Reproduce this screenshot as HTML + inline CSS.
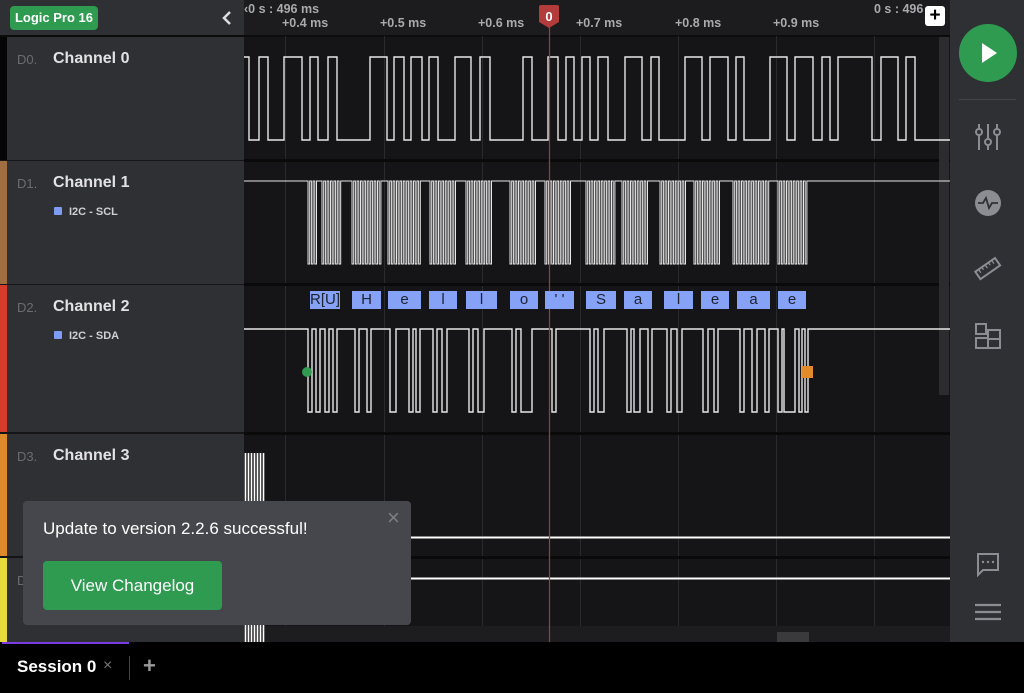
<!DOCTYPE html>
<html><head><meta charset="utf-8">
<style>
*{margin:0;padding:0;box-sizing:border-box}
body{width:1024px;height:693px;overflow:hidden;background:#151517;font-family:"Liberation Sans",sans-serif;position:relative}
.abs{position:absolute}
.lp{position:absolute;left:0;width:244px;background:#2f3034}
.bar{position:absolute;left:0;width:7px}
.dn{position:absolute;left:17px;font-size:13px;color:#6b6c70}
.cn{position:absolute;left:53px;font-size:16px;color:#e2e2e4;font-weight:bold}
.an{position:absolute;left:54px;font-size:11px;color:#d0d0d4;font-weight:bold}
.an i{display:inline-block;width:8px;height:8px;background:#7f9cf5;border-radius:1px;margin-right:7px;vertical-align:-0px}
.tl{position:absolute;top:16px;font-size:12.5px;color:#a9aaae;font-weight:bold}
.lb{position:absolute;top:291px;height:18px;background:#86a2f7;color:#1d2230;font-size:15px;text-align:center;line-height:18px}
</style></head><body>
<div class="abs" style="left:0;top:0;width:244px;height:36px;background:#2f3034"></div>
<div class="abs" style="left:244px;top:0;width:706px;height:36px;background:#1c1c1e"></div>
<div class="abs" style="left:0;top:35px;width:950px;height:2px;background:#0c0c0d"></div>
<div class="abs" style="left:10px;top:6px;width:88px;height:24px;background:#2e9b50;border-radius:4px;color:#fff;font-weight:bold;font-size:13px;line-height:24px;text-align:center">Logic Pro 16</div>
<svg class="abs" style="left:219px;top:9px" width="16" height="18"><path d="M11 3 L5 9 L11 15" stroke="#ddd" stroke-width="2.5" fill="none"/></svg>
<div class="abs" style="left:244px;top:2px;font-size:12.5px;color:#a9aaae;font-weight:bold">‹0 s : 496 ms</div>
<div class="tl" style="left:282px">+0.4 ms</div>
<div class="tl" style="left:380px">+0.5 ms</div>
<div class="tl" style="left:478px">+0.6 ms</div>
<div class="tl" style="left:576px">+0.7 ms</div>
<div class="tl" style="left:675px">+0.8 ms</div>
<div class="tl" style="left:773px">+0.9 ms</div>
<div class="abs" style="left:874px;top:2px;font-size:12.5px;color:#a9aaae;font-weight:bold">0 s : 496</div>
<div class="abs" style="left:925px;top:6px;width:20px;height:20px;background:#fff;border-radius:3px;color:#000;font-weight:bold;font-size:19px;line-height:19px;text-align:center">+</div>

<div class="lp" style="top:37px;height:123px"></div>
<div class="lp" style="top:161px;height:123px"></div>
<div class="lp" style="top:285px;height:147px"></div>
<div class="lp" style="top:434px;height:122px"></div>
<div class="lp" style="top:558px;height:84px"></div>
<div class="bar" style="top:37px;height:123px;background:#050505"></div>
<div class="bar" style="top:161px;height:123px;background:#a06e40"></div>
<div class="bar" style="top:285px;height:147px;background:#d63b2b"></div>
<div class="bar" style="top:434px;height:122px;background:#de8a2a"></div>
<div class="bar" style="top:558px;height:84px;background:#e8d93c"></div>
<div class="dn" style="top:52px">D0.</div><div class="cn" style="top:50px">Channel 0</div>
<div class="dn" style="top:176px">D1.</div><div class="cn" style="top:174px">Channel 1</div>
<div class="an" style="top:206px"><i></i>I2C - SCL</div>
<div class="dn" style="top:300px">D2.</div><div class="cn" style="top:298px">Channel 2</div>
<div class="an" style="top:330px"><i></i>I2C - SDA</div>
<div class="dn" style="top:449px">D3.</div><div class="cn" style="top:447px">Channel 3</div>
<div class="dn" style="top:573px">D</div>

<svg class="abs" style="left:0;top:0" width="950" height="642" id="w">
<g stroke="#2a2a2d" stroke-width="1">
<line x1="285.5" y1="36" x2="285.5" y2="642"/><line x1="384.5" y1="36" x2="384.5" y2="642"/><line x1="482.5" y1="36" x2="482.5" y2="642"/><line x1="580.5" y1="36" x2="580.5" y2="642"/><line x1="678.5" y1="36" x2="678.5" y2="642"/><line x1="776.5" y1="36" x2="776.5" y2="642"/><line x1="874.5" y1="36" x2="874.5" y2="642"/>
</g>
<g fill="#0a0a0b"><rect x="244" y="159" width="706" height="3"/><rect x="244" y="283" width="706" height="3"/><rect x="244" y="432" width="706" height="3"/><rect x="244" y="556" width="706" height="3"/></g>
<rect x="244" y="626" width="706" height="16" fill="#1d1d1f"/>
<rect x="777" y="632" width="32" height="10" fill="#3a3a3c"/>
<rect x="939" y="37" width="10" height="358" fill="#2c2c2e"/>
<g id="waves" fill="none" stroke="#e8e8e8" stroke-width="1.4"></g>
<line x1="410" y1="537.5" x2="950" y2="537.5" stroke="#fff" stroke-width="2"/>
<line x1="410" y1="578.5" x2="950" y2="578.5" stroke="#fff" stroke-width="2"/>
<circle cx="307" cy="372" r="5" fill="#2e9b50"/>
<rect x="802" y="366" width="11" height="12" fill="#e08a2a"/>
<line x1="549.5" y1="24" x2="549.5" y2="642" stroke="#a33a3a" stroke-width="1.2"/>
<path d="M539 7 Q539 5 541 5 L557 5 Q559 5 559 7 L559 22 L549 28 L539 22Z" fill="#b23c3c"/>
<text x="549" y="21" fill="#fff" font-size="13" font-weight="bold" text-anchor="middle" font-family="Liberation Sans">0</text>
</svg>
<div id="lbls"></div>

<div class="abs" style="left:950px;top:0;width:74px;height:642px;background:#2f3034"></div>
<svg class="abs" style="left:950px;top:0" width="74" height="642">
<circle cx="38" cy="53" r="29" fill="#2e9b50"/>
<path d="M32 43 L47 53 L32 63Z" fill="#fff"/>
<line x1="9" y1="99.5" x2="66" y2="99.5" stroke="#45464a" stroke-width="1"/>
<g stroke="#8c8d92" stroke-width="2" fill="none">
<line x1="29" y1="124" x2="29" y2="150"/><line x1="38" y1="124" x2="38" y2="150"/><line x1="47" y1="124" x2="47" y2="150"/>
<circle cx="29" cy="132" r="3" fill="#2f3034"/><circle cx="38" cy="142" r="3" fill="#2f3034"/><circle cx="47" cy="132" r="3" fill="#2f3034"/>
</g>
<circle cx="38" cy="203" r="13" fill="#8c8d92"/>
<path d="M28 203 L33 203 L36 198 L39 208 L42 203 L48 203" stroke="#2f3034" stroke-width="1.8" fill="none"/>
<g transform="rotate(-35 38 269)"><rect x="26" y="264" width="24" height="9" stroke="#8c8d92" stroke-width="2" fill="none"/>
<path d="M30 264v4M34 264v3M38 264v4M42 264v3M46 264v4" stroke="#8c8d92" stroke-width="1.3"/></g>
<g stroke="#8c8d92" stroke-width="2" fill="none"><rect x="26" y="324" width="10" height="10"/><path d="M38 330 H50 V348 H26 V338 H38 Z M38 338 V348 M38 339 H50"/></g>
<g stroke="#8c8d92" stroke-width="2" fill="none"><path d="M28 554 H48 V570 H33 L28 575 Z"/></g>
<g fill="#8c8d92"><circle cx="33" cy="562" r="1.2"/><circle cx="38" cy="562" r="1.2"/><circle cx="43" cy="562" r="1.2"/></g>
<g stroke="#8c8d92" stroke-width="2.2"><line x1="25" y1="605" x2="51" y2="605"/><line x1="25" y1="612" x2="51" y2="612"/><line x1="25" y1="619" x2="51" y2="619"/></g>
</svg>

<div class="abs" style="left:23px;top:501px;width:388px;height:124px;background:#46474c;border-radius:4px"></div>
<div class="abs" style="left:43px;top:519px;font-size:17px;color:#fff">Update to version 2.2.6 successful!</div>
<div class="abs" style="left:387px;top:505px;font-size:22px;color:#7d7e83">×</div>
<div class="abs" style="left:43px;top:561px;width:179px;height:49px;background:#2e9b50;border-radius:4px;color:#fff;font-size:17px;line-height:49px;text-align:center">View Changelog</div>

<div class="abs" style="left:0;top:642px;width:1024px;height:51px;background:#000"></div>
<div class="abs" style="left:2px;top:642px;width:127px;height:2px;background:#7a3cdc"></div>
<div class="abs" style="left:17px;top:657px;font-size:17px;font-weight:bold;color:#fff">Session 0</div>
<div class="abs" style="left:103px;top:657px;font-size:16px;color:#777">×</div>
<div class="abs" style="left:129px;top:656px;width:1px;height:24px;background:#444"></div>
<div class="abs" style="left:143px;top:653px;font-size:22px;font-weight:bold;color:#999">+</div>

<script>
var NS="http://www.w3.org/2000/svg",g=document.getElementById("waves");
function path(d,sw){var p=document.createElementNS(NS,"path");p.setAttribute("d",d);if(sw)p.setAttribute("stroke-width",sw);g.appendChild(p);}
function wave(edges,hi,lo,start,end,startHigh,sw){var s=startHigh,d="M"+start+" "+(s?hi:lo);edges.forEach(function(x){d+=" L"+x+" "+(s?hi:lo);s=!s;d+=" L"+x+" "+(s?hi:lo);});d+=" L"+end+" "+(s?hi:lo);path(d,sw);}
var e0=[249,259,268,284,302,310,318,328,337,370,387,394,404,411,422,429,438,455,471,480,490,523,532,548,558,566,574,582,590,598,608,625,642,651,659,685,702,710,728,736,744,770,787,795,813,822,830,838,872,881,898,906,915];
wave(e0,57,140,244,950,true);
var b=[[308,318],[322,340],[352,382],[388,420],[430,458],[466,494],[510,536],[545,573],[586,616],[622,650],[660,686],[694,722],[733,770],[778,808]],e1=[];
b.forEach(function(r){for(var x=r[0];x<r[1]-1;x+=3.4){e1.push(x.toFixed(1));e1.push((x+1.7).toFixed(1));}});
wave(e1,181,264,244,950,true,1);
var e2=[308,312,316,320,325,329,333,337,355,359,367,371,390,396,409,413,416,420,433,437,442,447,469,473,478,484,512,516,521,532,552,556,590,594,598,604,627,631,634,640,648,652,667,671,677,682,703,708,714,718,740,744,752,757,765,769,778,782,784,795,799,802,805,808];
wave(e2,329,412,244,950,true);
var d="";for(var x=245.5;x<265;x+=3){d+="M"+x+" 453 L"+x+" 642 ";}
var p=document.createElementNS(NS,"path");p.setAttribute("d",d);p.setAttribute("stroke","#fff");p.setAttribute("stroke-width","1.6");g.appendChild(p);
var L=[["R[U]",310,340],["H",352,381],["e",388,421],["l",429,457],["l",466,497],["o",510,538],["' '",545,574],["S",586,616],["a",624,652],["l",664,693],["e",701,729],["a",737,770],["e",778,806]],h="";
L.forEach(function(l){h+='<div class="lb" style="left:'+l[1]+'px;width:'+(l[2]-l[1])+'px">'+l[0]+'</div>';});
document.getElementById("lbls").innerHTML=h;
</script>
</body></html>
